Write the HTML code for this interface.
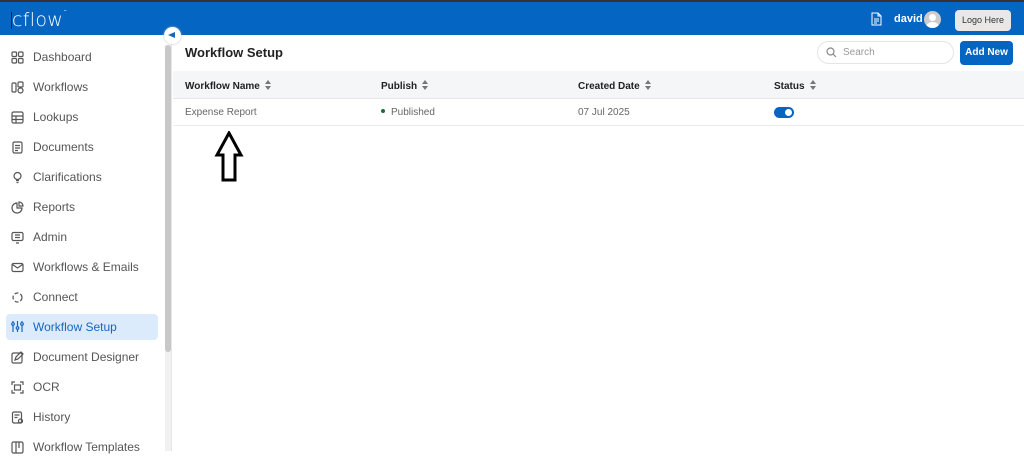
<!DOCTYPE html>
<html><head><style>
*{box-sizing:border-box;margin:0;padding:0}
body{width:1024px;height:451px;overflow:hidden;background:#fff;font-family:"Liberation Sans",sans-serif;position:relative}
.top{position:absolute;left:0;top:0;width:1024px;height:35px;background:#0565c2;border-top:2px solid #333}
.logo{position:absolute;left:12px;top:7px;color:#fff;font-size:19px;letter-spacing:0.3px;font-family:"DejaVu Sans",sans-serif;font-weight:200}
.logo:before{content:"";position:absolute;left:-1px;top:3px;width:1px;height:17px;background:#222}
.user{position:absolute;left:894px;top:11px;color:#fff;font-weight:bold;font-size:11px}
.av{position:absolute;left:924px;top:9px;width:17px;height:17px;border-radius:50%;background:#ccc;overflow:hidden}
.av:before{content:"";position:absolute;left:5px;top:3px;width:7px;height:7px;border-radius:50%;background:#fff}
.av:after{content:"";position:absolute;left:2px;top:11px;width:13px;height:10px;border-radius:50%;background:#fff}
.lh{position:absolute;left:955px;top:8px;width:56px;height:21px;background:#e8e8e8;border-radius:4px;font-size:9px;color:#333;text-align:center;line-height:21px}
.side{position:absolute;left:0;top:35px;width:172px;height:416px;border-right:1px solid #e6e6e6}
.track{position:absolute;left:165px;top:45px;width:6px;height:406px;background:#f1f1f1}
.thumb{position:absolute;left:165px;top:45px;width:6px;height:307px;background:#c8c8c8;border-radius:3px}
.item{position:absolute;left:6px;width:152px;height:25px;font-size:12px;color:#555;line-height:25px;padding-left:27px}
.item svg{position:absolute;left:5px;top:6px}
.item.act{background:#dcebfb;color:#1565c0;border-radius:4px}
.tog{position:absolute;left:164px;top:27px;width:17px;height:17px;border-radius:50%;background:#fff;box-shadow:0 0 2px #bbb}
.tog:after{content:"";position:absolute;left:4px;top:5px;border-right:7px solid #1565c0;border-top:3.5px solid transparent;border-bottom:3.5px solid transparent}
h1{position:absolute;left:185px;top:45px;font-size:13px;font-weight:bold;color:#222}
.search{position:absolute;left:817px;top:41px;width:137px;height:23px;border:1px solid #e4e4e4;border-radius:12px;font-size:10px;color:#999;line-height:21px;padding-left:25px}
.search svg{position:absolute;left:8px;top:5px}
.add{position:absolute;left:960px;top:41px;width:53px;height:24px;background:#0565c2;border-radius:4px;color:#fff;font-size:10px;font-weight:bold;text-align:center;line-height:24px}
.th{position:absolute;left:173px;top:71px;width:851px;height:28px;background:#f5f6f8;border-bottom:1px solid #e6e6e6}
.tr{position:absolute;left:173px;top:99px;width:851px;height:27px;border-bottom:1px solid #ececec}
.c{position:absolute;font-size:10px;line-height:12px}
.h{font-weight:bold;color:#222;top:81px}
.d{color:#666;top:107px}
.s{display:inline-block;position:relative;width:7px;height:10px;vertical-align:middle;margin-left:5px;top:-1px}
.s:before{content:"";position:absolute;left:0;top:0;border-bottom:4px solid #777;border-left:3.5px solid transparent;border-right:3.5px solid transparent}
.s:after{content:"";position:absolute;left:0;top:6px;border-top:4px solid #777;border-left:3.5px solid transparent;border-right:3.5px solid transparent}
.sw{position:absolute;left:774px;top:107px;width:20px;height:11px;border-radius:6px;background:#0565c2}
.sw:after{content:"";position:absolute;left:11px;top:2px;width:7px;height:7px;border-radius:50%;background:#fff}
</style></head><body>
<div class="top">
<div class="logo">cflow<span style="font-size:8px;vertical-align:top">˜</span></div>
<svg style="position:absolute;left:871px;top:10px" width="11" height="14" viewBox="0 0 11 14"><path d="M1 1h6l3 3v9H1z M7 1v3h3 M3 7h5 M3 9h5 M3 11h3" fill="none" stroke="#fff" stroke-width="1"/></svg>
<div class="user">david</div><div class="av"></div>
<div class="lh">Logo Here</div>
</div>
<div class="side"></div>
<div class="track"></div><div class="thumb"></div>
<div class="tog"></div>
<div class="item" style="top:45px"><svg width="13" height="13" viewBox="0 0 13 13" fill="none" stroke="#555" stroke-width="1.2"><rect x="1" y="1" width="4.5" height="4.5" rx="1"/><rect x="7.5" y="1" width="4.5" height="4.5" rx="1"/><rect x="1" y="7.5" width="4.5" height="4.5" rx="1"/><rect x="7.5" y="7.5" width="4.5" height="4.5" rx="1"/></svg>Dashboard</div>
<div class="item" style="top:75px"><svg width="13" height="13" viewBox="0 0 13 13" fill="none" stroke="#555" stroke-width="1.2"><rect x="1" y="2" width="4" height="9" rx="1"/><rect x="7" y="1" width="5" height="5" rx="1"/><circle cx="9.5" cy="9.5" r="2.5"/></svg>Workflows</div>
<div class="item" style="top:105px"><svg width="13" height="13" viewBox="0 0 13 13" fill="none" stroke="#555" stroke-width="1.2"><rect x="1" y="1" width="11" height="11" rx="1.5"/><path d="M1 5h11M1 8.5h11M5 5v7"/></svg>Lookups</div>
<div class="item" style="top:135px"><svg width="13" height="13" viewBox="0 0 13 13" fill="none" stroke="#555" stroke-width="1.2"><rect x="2" y="1" width="9" height="11" rx="1.5"/><path d="M4 4.5h5M4 7h5M4 9.5h3"/></svg>Documents</div>
<div class="item" style="top:165px"><svg width="13" height="13" viewBox="0 0 13 13" fill="none" stroke="#555" stroke-width="1.2"><circle cx="6.5" cy="5" r="3.5"/><path d="M5 9.5h3M5.5 11.5h2"/></svg>Clarifications</div>
<div class="item" style="top:195px"><svg width="13" height="13" viewBox="0 0 13 13" fill="none" stroke="#555" stroke-width="1.2"><path d="M6 2a5 5 0 1 0 5 5H6z"/><path d="M8 1v4h4a4 4 0 0 0-4-4z"/></svg>Reports</div>
<div class="item" style="top:225px"><svg width="13" height="13" viewBox="0 0 13 13" fill="none" stroke="#555" stroke-width="1.2"><rect x="1" y="1.5" width="11" height="8" rx="1.5"/><path d="M4 4h5M4 6.5h5M5 12h3"/></svg>Admin</div>
<div class="item" style="top:255px"><svg width="13" height="13" viewBox="0 0 13 13" fill="none" stroke="#555" stroke-width="1.2"><rect x="1" y="2.5" width="11" height="8" rx="1.5"/><path d="M1.5 3.5l5 3.5 5-3.5"/></svg>Workflows &amp; Emails</div>
<div class="item" style="top:285px"><svg width="13" height="13" viewBox="0 0 13 13" fill="none" stroke="#555" stroke-width="1.2"><circle cx="6.5" cy="6.5" r="4.5" stroke-dasharray="4 2"/></svg>Connect</div>
<div class="item act" style="top:314px;height:26px;line-height:26px"><svg width="13" height="13" viewBox="0 0 13 13" fill="none" stroke="#1565c0" stroke-width="1.2"><path d="M2 1v11M6.5 1v11M11 1v11"/><circle cx="2" cy="4" r="1.3" fill="#dcebfb"/><circle cx="6.5" cy="8" r="1.3" fill="#dcebfb"/><circle cx="11" cy="4" r="1.3" fill="#dcebfb"/></svg>Workflow Setup</div>
<div class="item" style="top:345px"><svg width="13" height="13" viewBox="0 0 13 13" fill="none" stroke="#555" stroke-width="1.2"><rect x="1" y="2" width="10" height="10" rx="1.5"/><path d="M4 9l1-3 5-5 2 2-5 5z"/></svg>Document Designer</div>
<div class="item" style="top:375px"><svg width="13" height="13" viewBox="0 0 13 13" fill="none" stroke="#555" stroke-width="1.2"><path d="M1 4V1h3M9 1h3v3M12 9v3H9M4 12H1V9"/><rect x="3.5" y="4" width="6" height="5"/></svg>OCR</div>
<div class="item" style="top:405px"><svg width="13" height="13" viewBox="0 0 13 13" fill="none" stroke="#555" stroke-width="1.2"><rect x="1.5" y="1" width="9" height="11" rx="1.5"/><path d="M3.5 4h5M3.5 6.5h3"/><circle cx="9.5" cy="10" r="2"/></svg>History</div>
<div class="item" style="top:435px"><svg width="13" height="13" viewBox="0 0 13 13" fill="none" stroke="#555" stroke-width="1.2"><rect x="1" y="1" width="11" height="11" rx="1.5"/><path d="M5 1v11M8 1v6"/></svg>Workflow Templates</div>

<h1>Workflow Setup</h1>
<div class="search"><svg width="11" height="11" viewBox="0 0 11 11" fill="none" stroke="#888" stroke-width="1.2"><circle cx="4.5" cy="4.5" r="3.5"/><path d="M7 7l3 3"/></svg>Search</div>
<div class="add">Add New</div>
<div class="th"></div><div class="tr"></div>
<div class="c h" style="left:185px">Workflow Name<span class="s"></span></div>
<div class="c h" style="left:381px">Publish<span class="s"></span></div>
<div class="c h" style="left:578px">Created Date<span class="s"></span></div>
<div class="c h" style="left:774px">Status<span class="s"></span></div>
<div class="c d" style="left:185px">Expense Report</div>
<div class="c d" style="left:381px"><span style="display:inline-block;width:4px;height:4px;border-radius:50%;background:#1b6e3a;vertical-align:middle;margin-right:6px;position:relative;top:-1px"></span>Published</div>
<div class="c d" style="left:578px">07 Jul 2025</div>
<div class="sw"></div>
<svg style="position:absolute;left:214px;top:131px" width="30" height="52" viewBox="0 0 30 52"><path d="M15 2L27 24H21V49H9V24H3Z" fill="#fff" stroke="#000" stroke-width="3" stroke-linejoin="miter"/></svg>
</body></html>
